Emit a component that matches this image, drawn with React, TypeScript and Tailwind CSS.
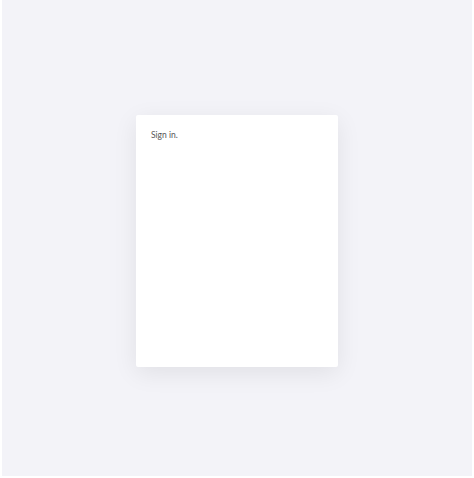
export default function App() {
  return (
    <div className="w-[474px] h-[478px] bg-white">
      <div className="ml-[2px] w-[470px] h-[476px] bg-[#f3f3f8] flex items-start justify-center pt-[115px]" style={{ fontFamily: 'Lato, "Liberation Sans", sans-serif' }}>
        <div className="w-[202px] h-[252px] bg-white rounded-[2px] shadow-[0_6px_24px_rgba(0,0,0,0.08)] px-[15px] pt-[15px]">
          <p className="text-[8.5px] leading-[11px] text-[#555]">Sign in.</p>
        </div>
      </div>
    </div>
  );
}
